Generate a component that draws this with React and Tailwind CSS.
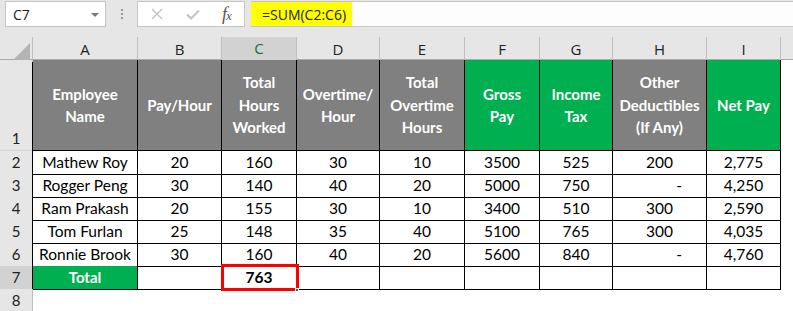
import React from 'react';

// Payroll sheet with a SUM in C7, drawn like an Excel window

const cols = ['A', 'B', 'C', 'D', 'E', 'F', 'G', 'H', 'I'];
const gridCols = 'grid grid-cols-[33px_105px_84px_75px_83px_85px_75px_73px_94px_74px_1fr]';

const headers = [
  { lines: ['Employee', 'Name'], green: false },
  { lines: ['Pay/Hour'], green: false },
  { lines: ['Total', 'Hours', 'Worked'], green: false },
  { lines: ['Overtime/', 'Hour'], green: false },
  { lines: ['Total', 'Overtime', 'Hours'], green: false },
  { lines: ['Gross', 'Pay'], green: true },
  { lines: ['Income', 'Tax'], green: true },
  { lines: ['Other', 'Deductibles', '(If Any)'], green: false },
  { lines: ['Net Pay'], green: true },
];

const rows = [
  ['Mathew Roy', 20, 160, 30, 10, 3500, 525, 200, '2,775'],
  ['Rogger Peng', 30, 140, 40, 20, 5000, 750, '-', '4,250'],
  ['Ram Prakash', 20, 155, 30, 10, 3400, 510, 300, '2,590'],
  ['Tom Furlan', 25, 148, 35, 40, 5100, 765, 300, '4,035'],
  ['Ronnie Brook', 30, 160, 40, 20, 5600, 840, '-', '4,760'],
];

const cell = 'border-r border-b border-black flex items-center justify-center';

function RowHead({ n, active, tall }) {
  return (
    <div
      className={`border-r border-b border-[#d4d4d4] border-r-[#bfbfbf] flex justify-center text-[15px] text-[#222] ${
        active ? 'bg-[#d2d2d2]' : 'bg-[#e6e6e6]'
      } ${tall ? 'items-end pb-[1px]' : 'items-center'}`}
    >
      {n}
    </div>
  );
}

export default function App() {
  return (
    <div className="w-[793px] h-[311px] overflow-hidden bg-white font-['Lato','Liberation_Sans',sans-serif] text-black">
      {/* formula bar */}
      <div className="h-[37px] bg-[#e6e6e6] pt-[1px] flex items-start">
        <div className="ml-[5px] w-[101px] h-[26px] bg-white border border-[#c6c6c6] flex items-center justify-between pl-[7px] pr-[6px] font-['Open_Sans',sans-serif] text-[14px] text-[#222]">
          <span>C7</span>
          <span className="w-0 h-0 border-l-[4px] border-r-[4px] border-t-[4px] border-l-transparent border-r-transparent border-t-[#777] mt-[1px]" />
        </div>
        <div className="w-[31px] h-[26px] flex flex-col items-center justify-center gap-[2px]">
          <span className="w-[2px] h-[2px] bg-[#999]" />
          <span className="w-[2px] h-[2px] bg-[#999]" />
          <span className="w-[2px] h-[2px] bg-[#999]" />
        </div>
        <div className="w-[108px] h-[26px] bg-white border border-[#c6c6c6] flex items-center">
          <svg className="ml-[13px]" width="12" height="12" viewBox="0 0 12 12">
            <path d="M1 1 L11 11 M11 1 L1 11" stroke="#c2c2c2" strokeWidth="1.4" fill="none" />
          </svg>
          <svg className="ml-[23px]" width="14" height="11" viewBox="0 0 14 11">
            <path d="M1 5.5 L5 9.5 L13 1.5" stroke="#c2c2c2" strokeWidth="2" fill="none" />
          </svg>
          <span className="ml-[22px] font-['Liberation_Serif',serif] italic text-[18px] leading-none text-[#555] tracking-[-1px]">
            f<span className="text-[13px]">x</span>
          </span>
        </div>
        <div className="w-[6px]" />
        <div className="flex-1 h-[26px] bg-[#fdfdfd] border-y border-[#c6c6c6] flex items-stretch">
          <div className="w-[101px] bg-[#ffff00] flex items-center pl-[11px] font-['Open_Sans',sans-serif] text-[14px] text-[#222]">
            =SUM(C2:C6)
          </div>
        </div>
      </div>

      {/* column letters */}
      <div className={`${gridCols} h-[23px] bg-[#e6e6e6] border-b border-[#ababab]`}>
        <div className="relative border-r border-[#bfbfbf]">
          <svg className="absolute right-[2px] bottom-[2px]" width="17" height="17" viewBox="0 0 17 17">
            <polygon points="17,0 17,17 0,17" fill="#b4b4b4" />
          </svg>
        </div>
        {cols.map((c) => (
          <div
            key={c}
            className={`flex items-center justify-center font-['Open_Sans',sans-serif] text-[15px] border-r border-[#bfbfbf] ${
              c === 'C' ? 'bg-[#d2d2d2] text-[#1e6b43] border-b-2 border-b-[#217346]' : 'text-[#222]'
            }`}
          >
            {c}
          </div>
        ))}
        <div />
      </div>

      {/* row 1: headers */}
      <div className={`${gridCols} h-[91px]`}>
        <RowHead n={1} tall />
        {headers.map((h, i) => (
          <div
            key={i}
            className={`${cell} ${i === 0 ? 'border-l border-l-black ml-[-1px]' : ''} flex-col font-bold text-[15px] leading-[22.5px] text-white ${
              h.green ? 'bg-[#00b050]' : 'bg-[#808080]'
            }`}
          >
            {h.lines.map((l) => (
              <span key={l}>{l}</span>
            ))}
          </div>
        ))}
        <div />
      </div>

      {/* rows 2-6: data */}
      {rows.map((r, ri) => (
        <div key={ri} className={`${gridCols} h-[23px]`}>
          <RowHead n={ri + 2} />
          {r.map((v, ci) => (
            <div
              key={ci}
              className={`${cell} text-[15.5px] ${ci === 0 ? 'border-l border-l-black ml-[-1px]' : ''} ${
                v === '-' ? 'justify-end pr-[24px]' : ''
              }`}
            >
              {v}
            </div>
          ))}
          <div />
        </div>
      ))}

      {/* row 7: total */}
      <div className={`${gridCols} h-[23px]`}>
        <RowHead n={7} active />
        <div className={`${cell} border-l border-l-black ml-[-1px] bg-[#00b050] text-white font-bold text-[15px]`}>Total</div>
        <div className={cell} />
        <div className={`${cell} relative font-bold text-[15.5px]`}>
          763
          <span className="absolute -left-[1px] -top-[2px] w-[78px] h-[27px] border-[3px] border-[#ff0000]" />
          <span className="absolute right-[-3px] bottom-[-3px] w-[4px] h-[4px] bg-[#217346] border border-white" />
        </div>
        {[3, 4, 5, 6, 7, 8].map((k) => (
          <div key={k} className={cell} />
        ))}
        <div />
      </div>

      {/* row 8 */}
      <div className={`${gridCols} h-[23px]`}>
        <RowHead n={8} />
      </div>
    </div>
  );
}
